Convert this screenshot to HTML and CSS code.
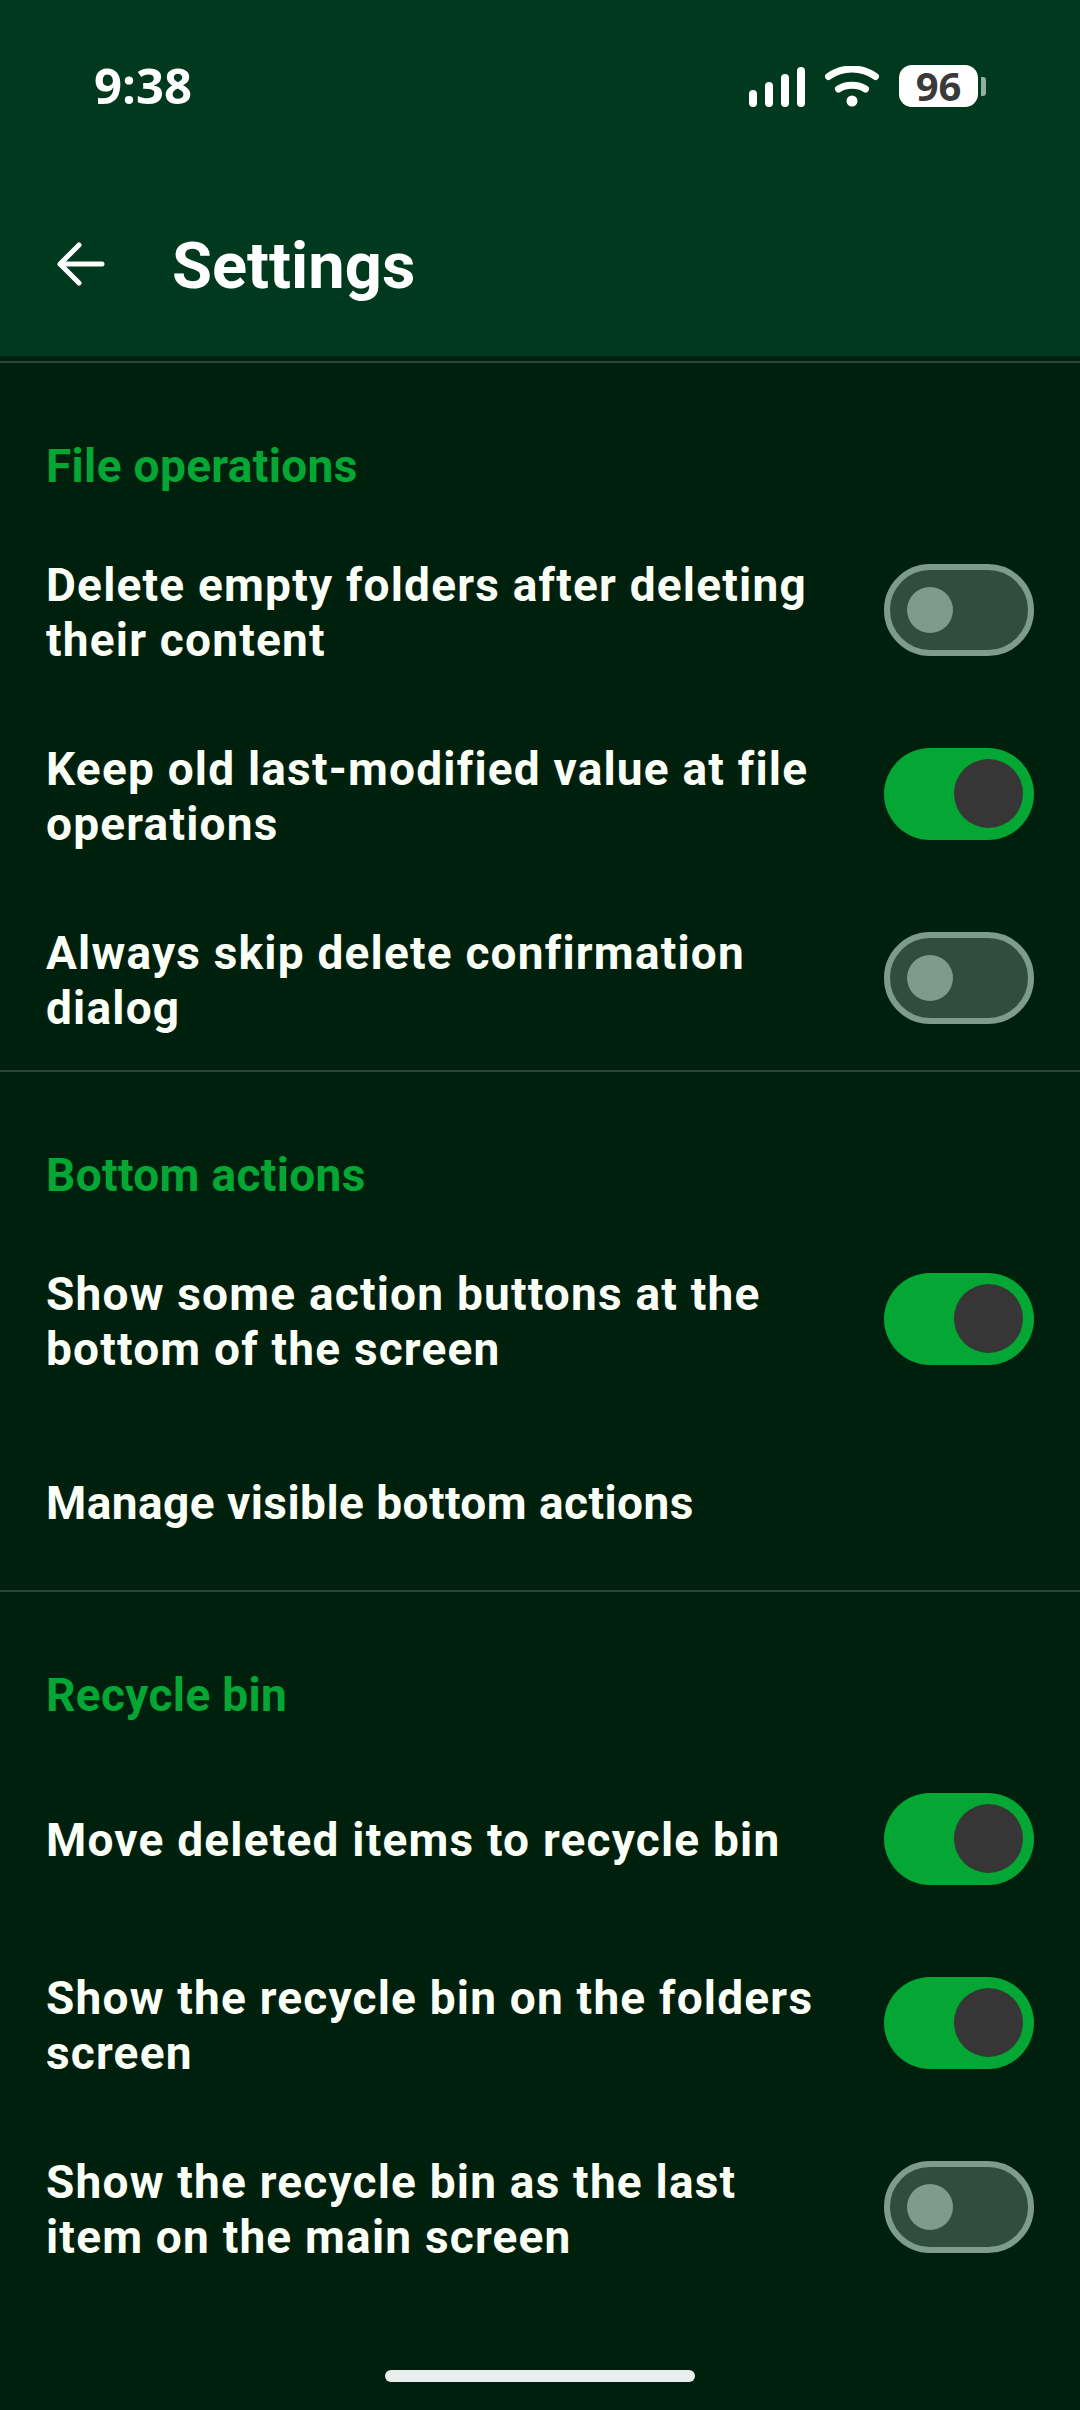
FILE: index.html

```html
<!DOCTYPE html>
<html lang="en">
<head>
  <meta charset="UTF-8" />
  <meta name="viewport" content="width=device-width, initial-scale=1.0"/>
  <title>Settings</title>
  <link rel="stylesheet" href="styles.css">
</head>
<body>
  <header class="appbar">
    <div class="statusbar">
      <span class="time">9:38</span>
      <div class="status-icons">
        <svg class="signal" width="56" height="40" viewBox="0 0 56 40">
          <rect x="0" y="23" width="8" height="17" rx="4"/>
          <rect x="16" y="15" width="8" height="25" rx="4"/>
          <rect x="32" y="7" width="8" height="33" rx="4"/>
          <rect x="48" y="0" width="8" height="40" rx="4"/>
        </svg>
        <svg class="wifi" width="54" height="41" viewBox="0 0 54 41">
          <path d="M3.5 10.5C17 0.5 37 0.5 50.5 10.5" fill="none" stroke="#fff" stroke-width="7" stroke-linecap="round"/>
          <path d="M13.5 23C21 18 33 18 40.5 23" fill="none" stroke="#fff" stroke-width="7" stroke-linecap="round"/>
          <circle cx="27" cy="35" r="5.5" fill="#fff"/>
        </svg>
        <div class="battery">
          <span class="battery-level">96</span>
          <span class="battery-nub"></span>
        </div>
      </div>
    </div>
    <div class="toolbar">
      <svg class="back" width="48" height="44" viewBox="0 0 48 44">
        <path d="M45 22H3M22 3L3 22L22 41" fill="none" stroke="#fff" stroke-width="5" stroke-linecap="round" stroke-linejoin="round"/>
      </svg>
      <h1>Settings</h1>
    </div>
  </header>

  <main class="content">
    <section class="group">
      <h2>File operations</h2>
      <div class="row">
        <span class="label">Delete empty folders after deleting their content</span>
        <span class="switch"></span>
      </div>
      <div class="row">
        <span class="label">Keep old last-modified value at file operations</span>
        <span class="switch on"></span>
      </div>
      <div class="row">
        <span class="label">Always skip delete confirmation dialog</span>
        <span class="switch"></span>
      </div>
    </section>

    <section class="group">
      <h2>Bottom actions</h2>
      <div class="row">
        <span class="label">Show some action buttons at the bottom of the screen</span>
        <span class="switch on"></span>
      </div>
      <div class="row row-short">
        <span class="label">Manage visible bottom actions</span>
      </div>
    </section>

    <section class="group">
      <h2>Recycle bin</h2>
      <div class="row row-single">
        <span class="label">Move deleted items to recycle bin</span>
        <span class="switch on"></span>
      </div>
      <div class="row">
        <span class="label">Show the recycle bin on the folders screen</span>
        <span class="switch on"></span>
      </div>
      <div class="row">
        <span class="label">Show the recycle bin as the last item on the main screen</span>
        <span class="switch"></span>
      </div>
    </section>
  </main>

  <div class="home-bar"></div>
</body>
</html>
```

FILE: styles.css

```css
* {
  box-sizing: border-box;
}
html, body {
  margin: 0;
  height: 2410px;
  overflow: hidden;
}
body {
  position: relative;
  background: #00200e;
  color: #fbfff6;
  font-family: Roboto, sans-serif;
}
.appbar {
  height: 356px;
  background: #01391f;
  color: #fff;
}
.statusbar {
  height: 172px;
  padding: 65px 94px 0 94px;
  display: flex;
  justify-content: space-between;
  align-items: flex-start;
}
.time {
  font-family: "Open Sans", sans-serif;
  font-weight: 700;
  font-size: 49px;
  line-height: 40px;
}
.status-icons {
  display: flex;
  align-items: flex-end;
  height: 42px;
}
.signal {
  fill: #fff;
  margin-right: 20px;
}
.wifi {
  margin-right: 20px;
}
.battery {
  display: flex;
  align-items: center;
}
.battery-level {
  width: 79px;
  height: 42px;
  border-radius: 13px;
  background: #fff;
  color: #3a3a3a;
  font-family: "Open Sans", sans-serif;
  font-weight: 700;
  font-size: 40px;
  line-height: 42px;
  text-align: center;
}
.battery-nub {
  width: 5px;
  height: 19px;
  margin-left: 3px;
  border-radius: 0 3px 3px 0;
  background: #8fb09c;
}
.toolbar {
  height: 184px;
  padding-left: 57px;
  display: flex;
  align-items: center;
}
.back {
  margin-right: 67px;
}
h1 {
  margin: 0;
  padding-top: 3px;
  font-size: 65px;
  font-weight: 700;
  line-height: 70px;
}
.group {
  border-top: 2px solid #2a4435;
}
.group:first-child {
  margin-top: 5px;
}
h2 {
  margin: 0;
  height: 155px;
  padding: 77px 46px 0;
  color: #04a734;
  font-size: 46px;
  font-weight: 700;
  line-height: 52px;
  letter-spacing: 0.35px;
}
.row {
  min-height: 184px;
  padding: 0 46px;
  display: flex;
  align-items: center;
  justify-content: space-between;
}
.label {
  width: 784px;
  padding-top: 6px;
  font-size: 46px;
  font-weight: 700;
  line-height: 55px;
  letter-spacing: 1.2px;
}
.row-short {
  min-height: 179px;
}
.row-short .label {
  letter-spacing: 0.45px;
}
.row-single .label {
  padding-top: 3px;
}
.switch {
  position: relative;
  flex: none;
  width: 150px;
  height: 92px;
  border: 6px solid #7f9b8b;
  border-radius: 46px;
  background: #314e3c;
}
.switch::after {
  content: "";
  position: absolute;
  left: 17px;
  top: 17px;
  width: 46px;
  height: 46px;
  border-radius: 50%;
  background: #7f9b8b;
}
.switch.on {
  border: none;
  background: #04a734;
}
.switch.on::after {
  left: 70px;
  top: 11px;
  width: 69px;
  height: 69px;
  background: #363636;
}
.home-bar {
  position: absolute;
  left: 385px;
  top: 2370px;
  width: 310px;
  height: 12px;
  border-radius: 6px;
  background: #eaeded;
}
```
